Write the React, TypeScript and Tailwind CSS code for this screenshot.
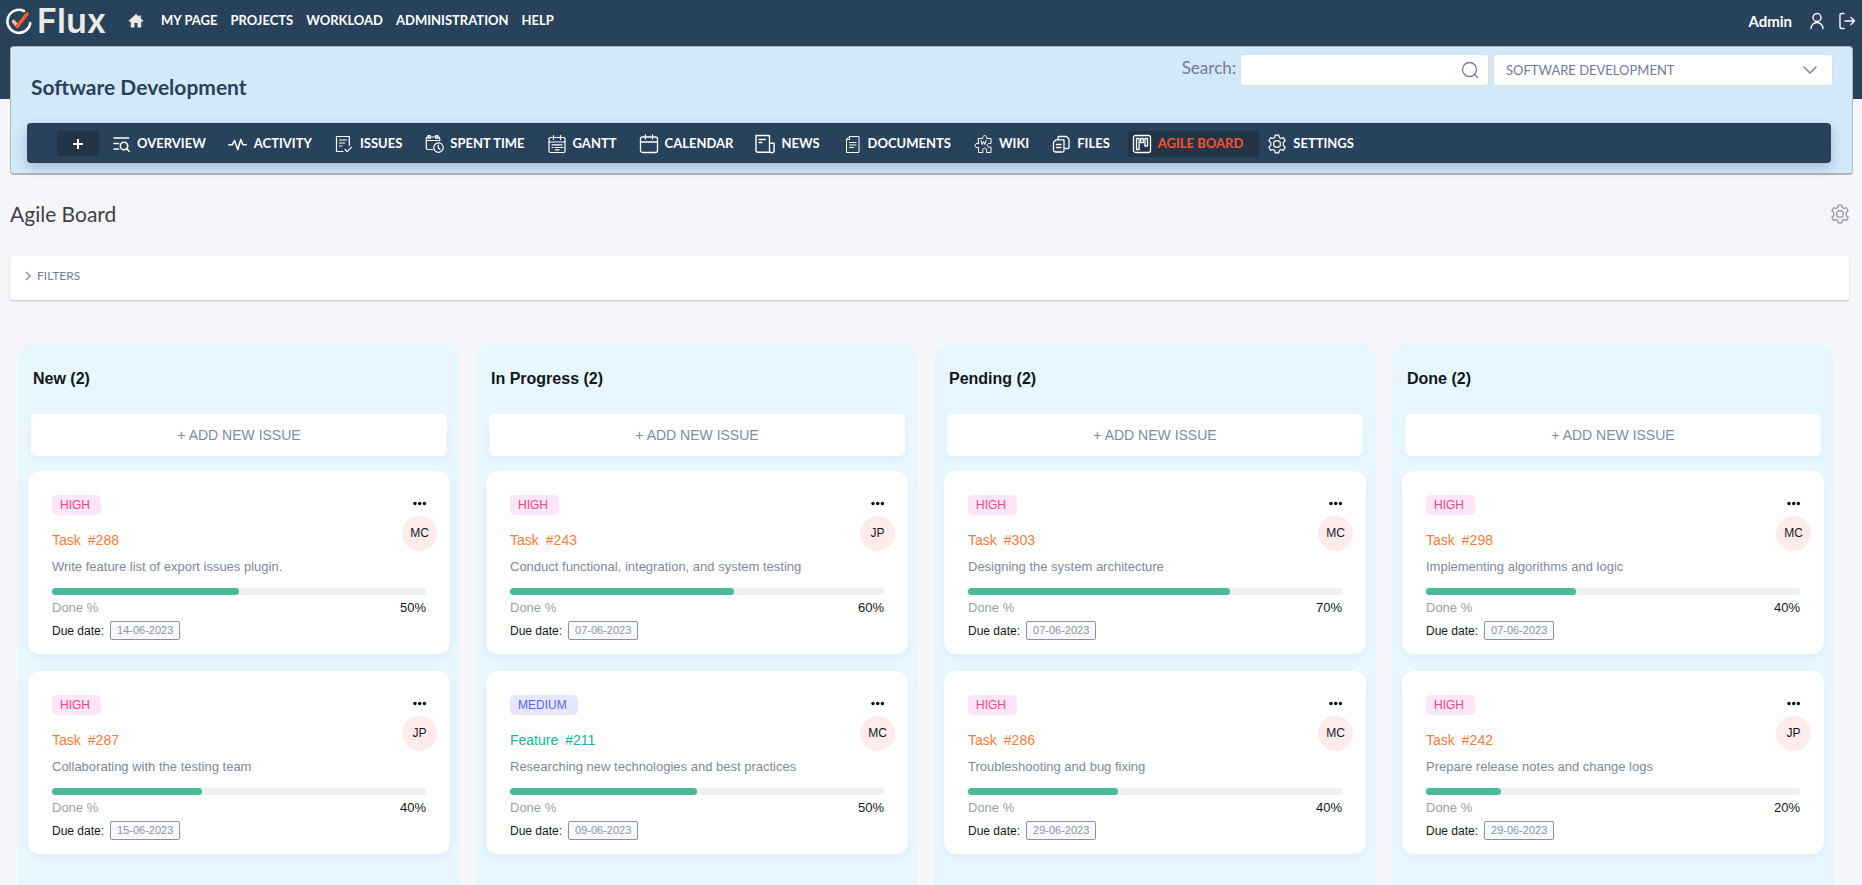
import type { ReactNode } from "react";

type Priority = "HIGH" | "MEDIUM";

interface Issue {
  id: number;
  tracker: "Task" | "Feature";
  priority: Priority;
  subject: string;
  done: number;
  due: string;
  assignee: string;
}

interface Column {
  name: string;
  issues: Issue[];
}

const columns: Column[] = [
  {
    name: "New",
    issues: [
      { id: 288, tracker: "Task", priority: "HIGH", subject: "Write feature list of export issues plugin.", done: 50, due: "14-06-2023", assignee: "MC" },
      { id: 287, tracker: "Task", priority: "HIGH", subject: "Collaborating with the testing team", done: 40, due: "15-06-2023", assignee: "JP" },
    ],
  },
  {
    name: "In Progress",
    issues: [
      { id: 243, tracker: "Task", priority: "HIGH", subject: "Conduct functional, integration, and system testing", done: 60, due: "07-06-2023", assignee: "JP" },
      { id: 211, tracker: "Feature", priority: "MEDIUM", subject: "Researching new technologies and best practices", done: 50, due: "09-06-2023", assignee: "MC" },
    ],
  },
  {
    name: "Pending",
    issues: [
      { id: 303, tracker: "Task", priority: "HIGH", subject: "Designing the system architecture", done: 70, due: "07-06-2023", assignee: "MC" },
      { id: 286, tracker: "Task", priority: "HIGH", subject: "Troubleshooting and bug fixing", done: 40, due: "29-06-2023", assignee: "MC" },
    ],
  },
  {
    name: "Done",
    issues: [
      { id: 298, tracker: "Task", priority: "HIGH", subject: "Implementing algorithms and logic", done: 40, due: "07-06-2023", assignee: "MC" },
      { id: 242, tracker: "Task", priority: "HIGH", subject: "Prepare release notes and change logs", done: 20, due: "29-06-2023", assignee: "JP" },
    ],
  },
];

const priorityStyles: Record<Priority, string> = {
  HIGH: "bg-[#ffe5f8] text-[#f0457f]",
  MEDIUM: "bg-[#e6e7ff] text-[#5f5fea]",
};

const trackerStyles = {
  Task: "text-[#f47c40]",
  Feature: "text-[#12b5a6]",
};

const topLinks = ["MY PAGE", "PROJECTS", "WORKLOAD", "ADMINISTRATION", "HELP"];

// All project menu icons share the same 20x20 box
function Icon({ children, width = 1.2 }: { children: ReactNode; width?: number }) {
  return (
    <svg
      className="h-5 w-5 shrink-0"
      viewBox="0 0 20 20"
      fill="none"
      stroke="currentColor"
      strokeWidth={width}
      strokeLinecap="round"
      strokeLinejoin="round"
      aria-hidden="true"
    >
      {children}
    </svg>
  );
}

function GearIcon() {
  return (
    <Icon width={1.2}>
      <circle cx="10" cy="10" r="3.4" />
      <path d="M8.2 1.2h3.6l.5 2.4 1.6.9 2.4-.9 1.9 3.1-1.9 1.7v3.2l1.9 1.7-1.9 3.1-2.4-.9-1.6.9-.5 2.4H8.2l-.5-2.4-1.6-.9-2.4.9-1.9-3.1 1.9-1.7V8.4L1.8 6.7l1.9-3.1 2.4.9 1.6-.9z" />
    </Icon>
  );
}

const menu: { label: string; icon: ReactNode; active?: boolean }[] = [
  {
    label: "OVERVIEW",
    icon: (
      <Icon width={1.6}>
        <path d="M3 4h14.5M3 9.5h4.5M3 15h4.5" />
        <circle cx="13" cy="12" r="3.7" />
        <path d="m15.7 14.7 2.5 2.5" />
      </Icon>
    ),
  },
  {
    label: "ACTIVITY",
    icon: (
      <Icon width={1.5}>
        <path d="M.8 10.8h3.4L6.5 6.5l3.3 9 3-10 2.2 5.3h3.2" />
      </Icon>
    ),
  },
  {
    label: "ISSUES",
    icon: (
      <Icon>
        <path d="M9 17.500H2.500v-15h12.800v9" />
        <path d="M5.500 6h6.800M5.500 9h5M5.500 12h2.500M11 15.500l2.300 2.200 4.200-4.500" />
      </Icon>
    ),
  },
  {
    label: "SPENT TIME",
    icon: (
      <Icon>
        <path d="M8.500 15.500H3.500a1.200 1.200 0 0 1-1.200-1.200V4.200A1.200 1.200 0 0 1 3.500 3h11a1.200 1.200 0 0 1 1.200 1.200V7M2.300 6.500h13.400" />
        <path d="M4 1.500h2.200v2.700H4zM11.700 1.500h2.200v2.700h-2.200z" />
        <circle cx="14.500" cy="13.600" r="4.700" />
        <path d="M14.300 11v2.800l1.800 1.700" />
      </Icon>
    ),
  },
  {
    label: "GANTT",
    icon: (
      <Icon>
        <rect x="2" y="3.500" width="16" height="15" rx="1.200" />
        <path d="M6.500 1.500v4M13.500 1.500v4M2 8h16M5 10.800h10M8 13.500h8M8.500 15.800h3.500M5 13.500h1" />
      </Icon>
    ),
  },
  {
    label: "CALENDAR",
    icon: (
      <Icon width={1.3}>
        <rect x="1.500" y="3" width="17" height="15.500" rx="2" />
        <path d="M6.500 1v4M13.500 1v4M1.500 8h17" />
      </Icon>
    ),
  },
  {
    label: "NEWS",
    icon: (
      <Icon width={1.4}>
        <path d="M14.500 18.300H2.800A1.800 1.800 0 0 1 1 16.500v-15h13.500v15a2.300 2.300 0 0 0 4.600 0V9.300h-4.600M4 5.500h6.500M4 8.500h3" />
      </Icon>
    ),
  },
  {
    label: "DOCUMENTS",
    icon: (
      <Icon width={1}>
        <path d="M7.500 2.500H17v16H4.500v-13zM7.500 2.500v3h-3" />
        <path d="M7.500 8.500h6.500M7.500 11h6.500M7.500 13.500h4" />
      </Icon>
    ),
  },
  {
    label: "WIKI",
    icon: (
      <Icon width={1}>
        <path d="M5.500 4.500h4.400a2 2 0 1 1 3.600 0h4.500v5h-1.300a1.900 1.900 0 1 0 0 3.600h1.300v5.400h-4.500v-1.200a2.100 2.100 0 1 0-3.600 0v1.200H5.500v-5.200a2.200 2.200 0 1 1 0-3.600z" />
        <path d="m8 6.500 1.200 4 1.300-3 1.300 3 1.200-4" />
      </Icon>
    ),
  },
  {
    label: "FILES",
    icon: (
      <Icon width={1.3}>
        <path d="M8 2.500h7.500L18 5v8.500a1 1 0 0 1-1 1h-3M8 2.500a1 1 0 0 0-1 1v2" />
        <path d="M5 5.800h8v10.700a1.500 1.500 0 0 1-1.500 1.500h-7A2 2 0 0 1 2.500 16V8.300zM5.500 10.500h4.500M5.500 13.500h4.500" />
      </Icon>
    ),
  },
  {
    label: "AGILE BOARD",
    active: true,
    icon: (
      <Icon width={1.3}>
        <rect x="1.500" y="1.500" width="17" height="17" rx="2" />
        <path d="M4.500 4.500h2.600v11H4.500zM8.700 4.500h2.600v4.200H8.700zM12.900 4.500h2.600v7.500h-2.600z" />
      </Icon>
    ),
  },
  { label: "SETTINGS", icon: <GearIcon /> },
];

function Logo() {
  return (
    <a href="#" className="flex items-center gap-[5px]">
      <svg className="h-7 w-7" viewBox="0 0 28 28" fill="none" strokeLinecap="round" strokeLinejoin="round" aria-hidden="true">
        <path d="M20 4A11.500 11.500 0 1 0 26.300 16" stroke="#ffffff" strokeWidth="2.600" />
        <path d="m9.500 14.500 4 4.500" stroke="#f9b49a" strokeWidth="3.600" />
        <path d="m13.500 19 9.500-12" stroke="#fd5a27" strokeWidth="3.600" />
      </svg>
      <span className="font-['Inter',sans-serif] text-[34px] leading-9 font-semibold text-[#ebebe4]">Flux</span>
    </a>
  );
}

function TopBar() {
  return (
    <header className="flex h-[46px] items-start justify-between pl-1 pr-[6px] text-white">
      <div className="flex h-[42px] items-center">
        <Logo />
        <nav className="ml-[22px] flex items-center gap-[13px] text-[13px] font-bold">
          <a href="#" aria-label="Home" className="mr-1 text-[#ebebe4]">
            <svg className="h-4 w-4" viewBox="0 0 16 16" fill="currentColor" aria-hidden="true">
              <path d="M8 1 .6 7.800l.8.9H2.800V14.500h3.700V10h3v4.500h3.700V8.700h1.400l.8-.9-2.600-2.400V2.500h-1.700v1.300z" />
            </svg>
          </a>
          {topLinks.map((link) => (
            <a key={link} href="#">{link}</a>
          ))}
        </nav>
      </div>
      <div className="flex h-[42px] items-center">
        <a href="#" className="mr-4 text-[15px] font-bold">Admin</a>
        <a href="#" aria-label="My account" className="mr-3">
          <svg className="h-[18px] w-[18px]" viewBox="0 0 18 18" fill="none" stroke="currentColor" strokeWidth="1.400" strokeLinecap="round" aria-hidden="true">
            <circle cx="9" cy="5.500" r="4" />
            <path d="M3 16.500c0-3.300 2.700-6 6-6s6 2.700 6 6" />
          </svg>
        </a>
        <a href="#" aria-label="Sign out">
          <svg className="h-[18px] w-[18px]" viewBox="0 0 18 18" fill="none" stroke="currentColor" strokeWidth="1.400" strokeLinecap="round" strokeLinejoin="round" aria-hidden="true">
            <path d="M6 1.500H3.500a1.500 1.500 0 0 0-1.500 1.500v12a1.500 1.500 0 0 0 1.500 1.500H6M7 9h9.500M13 5.500 16.500 9 13 12.500" />
          </svg>
        </a>
      </div>
    </header>
  );
}

function ProjectHeader() {
  return (
    <section className="ml-[10px] mr-[9px] rounded border border-b-2 border-[#b5b5b5] bg-[#d2e9f9] pb-[10px]">
      <div className="flex h-[76px] items-start justify-between pl-5 pr-[19px]">
        <h1 className="mt-7 text-[21px] leading-6 font-bold text-[#29425b]">Software Development</h1>
        <form className="mt-[7px] flex h-8 gap-1 text-[#74799b]">
          <label htmlFor="search" className="text-[17px] leading-7">Search:</label>
          <div className="relative w-[249px]">
            <input id="search" type="text" className="h-8 w-full rounded-[3px] border border-[#dcdfe2] bg-white px-3 text-sm outline-none" />
            <svg className="pointer-events-none absolute top-[7px] right-[10px] h-[18px] w-[18px]" viewBox="0 0 18 18" fill="none" stroke="currentColor" strokeWidth="1.300" strokeLinecap="round" aria-hidden="true">
              <circle cx="8.500" cy="8.500" r="7" />
              <path d="m13.500 13.500 3 3" />
            </svg>
          </div>
          <div className="relative w-[340px]">
            <select aria-label="Project" className="h-8 w-full appearance-none rounded-[3px] border border-[#dcdfe2] bg-white px-3 pt-[2px] text-[13px] outline-none">
              <option>SOFTWARE DEVELOPMENT</option>
            </select>
            <svg className="pointer-events-none absolute top-3 right-4 h-2 w-[14px]" viewBox="0 0 14 8" fill="none" stroke="currentColor" strokeWidth="1.300" strokeLinecap="round" aria-hidden="true">
              <path d="m1 1 6 6 6-6" />
            </svg>
          </div>
        </form>
      </div>
      <nav className="ml-4 mr-[21px] flex h-10 gap-1 rounded bg-[#29425b] pt-2 pl-[30px] text-[13px] font-bold text-white shadow-[0_5px_12px_rgba(60,90,150,0.3)]">
        <button type="button" aria-label="Add" className="mr-1 flex h-[25px] w-[42px] items-center justify-center rounded-[3px] bg-[#233447]">
          <svg className="h-3 w-3" viewBox="0 0 12 12" stroke="currentColor" strokeWidth="2" aria-hidden="true">
            <path d="M6 1v10M1 6h10" />
          </svg>
        </button>
        {menu.map((item) => (
          <a
            key={item.label}
            href="#"
            className={`flex h-[26px] items-center gap-[6px] rounded-[3px] pl-1 whitespace-nowrap ${item.active ? "bg-[#233447] pr-4" : "pr-[14px]"}`}
          >
            {item.icon}
            <span className={item.active ? "text-[#f9502a]" : ""}>{item.label}</span>
          </a>
        ))}
      </nav>
    </section>
  );
}

function IssueCard({ issue }: { issue: Issue }) {
  return (
    <article className="rounded-xl bg-white px-6 pt-6 pb-[14px] shadow-[0_4px_6px_#dbf0ff]">
      <div className="-mr-[11px] flex h-14 justify-between">
        <div>
          <span className={`block h-5 w-fit rounded-[5px] pl-2 pr-[11px] text-xs leading-5 ${priorityStyles[issue.priority]}`}>
            {issue.priority}
          </span>
          <a href="#" className={`mt-[15px] flex gap-[7px] text-sm leading-5 ${trackerStyles[issue.tracker]}`}>
            <span>{issue.tracker}</span>
            <span>#{issue.id}</span>
          </a>
        </div>
        <div className="flex flex-col items-center gap-[5px]">
          <button type="button" aria-label="Issue actions" className="flex h-4 items-center">
            <svg className="h-4 w-4" viewBox="0 0 16 16" fill="#0a0a0a" aria-hidden="true">
              <circle cx="3" cy="8.500" r="1.700" />
              <circle cx="7.700" cy="8.500" r="1.700" />
              <circle cx="12.400" cy="8.500" r="1.700" />
            </svg>
          </button>
          <span className="h-[35px] w-[35px] rounded-full bg-[#ffebeb] text-center text-xs leading-[34px] text-[#101828]">{issue.assignee}</span>
        </div>
      </div>
      <p className="mt-[6px] text-[13px] leading-5 text-[#80899c]">{issue.subject}</p>
      <div className="mt-[11px] h-[7px] rounded bg-[#f0f0f0]">
        <div className="h-full rounded bg-[#49ba98]" style={{ width: `${issue.done}%` }} />
      </div>
      <div className="mt-[3px] flex justify-between text-[13px] leading-5">
        <span className="text-[#999fa9]">Done %</span>
        <span className="text-[#101820]">{issue.done}%</span>
      </div>
      <div className="mt-[3px] flex items-center gap-[6px] text-xs text-[#101820]">
        <span>Due date:</span>
        <span className="h-[19px] rounded-[2px] border border-[#8f9298] bg-[#f8faff] px-[6px] text-[11px] leading-[17px] font-medium text-[#8f9399]">
          {issue.due}
        </span>
      </div>
    </article>
  );
}

function BoardColumn({ column }: { column: Column }) {
  return (
    <section className="rounded-t-[16px] bg-[#e8f6ff] px-[10px] pt-[25px]">
      <h3 className="pl-[5px] text-base leading-5 font-bold text-[#101820]">
        {column.name} ({column.issues.length})
      </h3>
      <div className="mt-[25px] px-[3px]">
        <button type="button" className="h-[42px] w-full rounded-[5px] bg-white text-sm text-[#838ba0] shadow-[0_4px_6px_#dbf0ff]">
          + ADD NEW ISSUE
        </button>
      </div>
      <div className="mt-[15px] flex flex-col gap-[17px] pb-[17px]">
        {column.issues.map((issue) => (
          <IssueCard key={issue.id} issue={issue} />
        ))}
      </div>
    </section>
  );
}

export default function App() {
  return (
    <div className="flex min-h-screen flex-col bg-[#f5f5fa] bg-[linear-gradient(#29425b_99px,#f5f5fa_99px)] font-['Lato',sans-serif]">
      <TopBar />
      <ProjectHeader />

      <div className="flex h-[81px] items-center justify-between pb-1 pl-[10px] pr-3">
        <h2 className="text-[21px] text-[#3f3f46]">Agile Board</h2>
        <button type="button" aria-label="Board settings" className="text-[#8a8fa8]">
          <GearIcon />
        </button>
      </div>

      <div className="ml-[10px] mr-[13px] h-11 rounded-[3px] bg-white pt-[10px] pl-[15px] shadow-[0_1px_2px_rgba(0,0,0,0.2)]">
        <button type="button" aria-expanded="false" className="flex h-5 items-center gap-[6px] text-xs text-[#767c96]">
          <svg className="h-[10px] w-[6px]" viewBox="0 0 6 10" fill="none" stroke="#999999" strokeWidth="1.600" aria-hidden="true">
            <path d="m1 1 4 4-4 4" />
          </svg>
          FILTERS
        </button>
      </div>

      {/* Board */}
      <main className="mt-11 grid flex-1 grid-cols-4 gap-4 pl-[18px] pr-7 font-['Liberation_Sans',Arial,sans-serif]">
        {columns.map((column) => (
          <BoardColumn key={column.name} column={column} />
        ))}
      </main>
    </div>
  );
}
